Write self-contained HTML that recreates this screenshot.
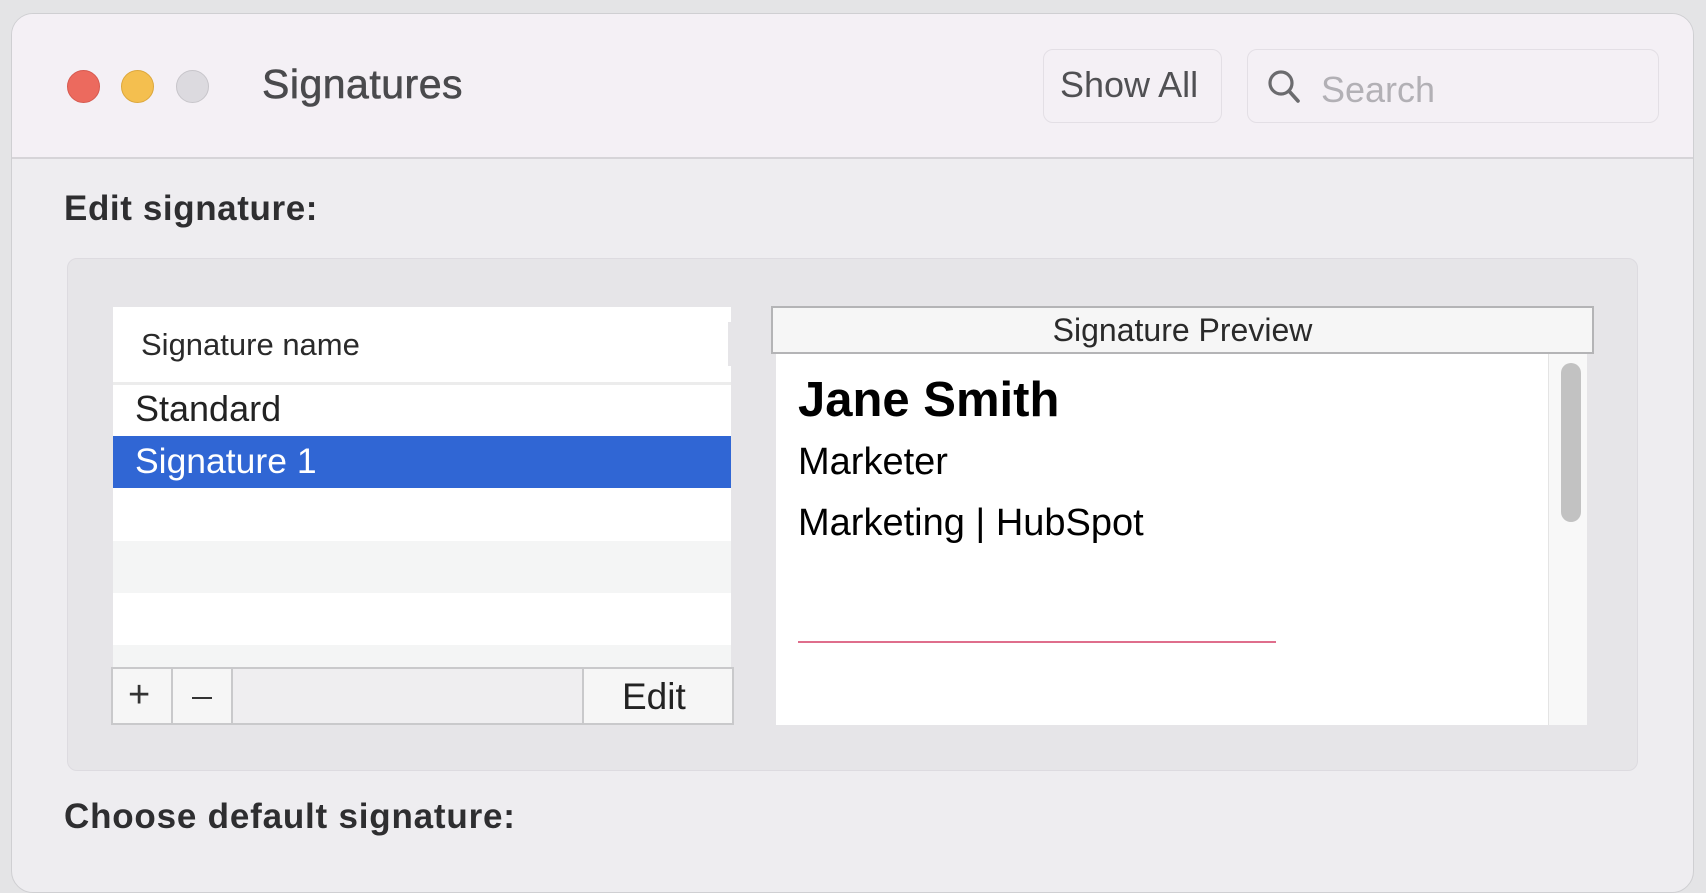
<!DOCTYPE html>
<html><head><style>
*{margin:0;padding:0;box-sizing:border-box}
body{width:1706px;height:862px;background:#e4e4e6;font-family:"Liberation Sans",sans-serif;position:relative;overflow:hidden}
.a{position:absolute}
.win{left:11px;top:13px;width:1683px;height:880px;background:#eeedf0;border-radius:22px;border:1px solid #cfcfd2;overflow:hidden}
.tb{left:0;top:0;width:100%;height:145px;background:#f4f0f5;border-bottom:2px solid #d6d4d8}
.dot{width:33px;height:33px;border-radius:50%;top:56px}
.t{white-space:nowrap}
</style></head><body>
<div class="a win">
 <div class="a tb"></div>
 <div class="a dot" style="left:55px;background:#ec6a5e;border:1px solid #d65a50"></div>
 <div class="a dot" style="left:109px;background:#f4bf4f;border:1px solid #dca73c"></div>
 <div class="a dot" style="left:164px;background:#dcdadf;border:1px solid #c7c5ca"></div>
 <div class="a t" style="left:250px;top:47px;font-size:41px;color:#4a4a4d;-webkit-text-stroke:0.6px #4a4a4d;letter-spacing:0.5px">Signatures</div>
 <div class="a" style="left:1031px;top:35px;width:179px;height:74px;border:1px solid #e3dfe5;border-radius:10px;background:#f4f0f5"></div>
 <div class="a t" style="left:1048px;top:50px;font-size:36px;color:#505053">Show All</div>
 <div class="a" style="left:1235px;top:35px;width:412px;height:74px;border:1px solid #e3dfe5;border-radius:10px;background:#f4f0f5"></div>
 <svg class="a" style="left:1253px;top:53px" width="40" height="40" viewBox="0 0 40 40"><circle cx="16" cy="16" r="11" fill="none" stroke="#6b6b6e" stroke-width="3.2"/><line x1="24" y1="24" x2="33" y2="34" stroke="#6b6b6e" stroke-width="3.6" stroke-linecap="round"/></svg>
 <div class="a t" style="left:1309px;top:55px;font-size:36px;color:#b2b0b5">Search</div>
 <div class="a t" style="left:52px;top:175px;font-size:35px;font-weight:bold;color:#2e2e30;letter-spacing:0.6px">Edit signature:</div>
 <div class="a" style="left:55px;top:244px;width:1571px;height:513px;background:#e6e5e8;border:1px solid #dddbe0;border-radius:10px"></div>
 <!-- list -->
 <div class="a" style="left:101px;top:293px;width:618px;height:360px;background:#fff"></div>
 <div class="a" style="left:716px;top:308px;width:3px;height:44px;background:#e6e5e8"></div>
 <div class="a t" style="left:129px;top:313px;font-size:31px;color:#2a2a2a">Signature name</div>
 <div class="a" style="left:101px;top:368px;width:618px;height:3px;background:#ececec"></div>
 <div class="a t" style="left:123px;top:374px;font-size:36px;color:#222">Standard</div>
 <div class="a" style="left:101px;top:422px;width:618px;height:52px;background:#3066d4"></div>
 <div class="a t" style="left:123px;top:427px;font-size:35.5px;color:#fff">Signature 1</div>
 <div class="a" style="left:101px;top:527px;width:618px;height:52px;background:#f4f5f5"></div>
 <div class="a" style="left:101px;top:631px;width:618px;height:22px;background:#f4f5f5"></div>
 <div class="a" style="left:99px;top:653px;width:623px;height:58px;background:#efeef0;border:2px solid #c9c9cb"></div>
 <div class="a" style="left:99px;top:653px;width:62px;height:58px;background:#f6f6f6;border:2px solid #c9c9cb"></div>
 <div class="a" style="left:159px;top:653px;width:62px;height:58px;background:#f6f6f6;border:2px solid #c9c9cb"></div>
 <div class="a t" style="left:116px;top:660px;font-size:38px;color:#333">+</div>
 <div class="a" style="left:180px;top:683px;width:20px;height:2px;background:#333"></div>
 <div class="a" style="left:570px;top:653px;width:152px;height:58px;background:#f6f6f6;border:2px solid #c9c9cb"></div>
 <div class="a t" style="left:610px;top:662px;font-size:37px;color:#222">Edit</div>
 <!-- preview -->
 <div class="a" style="left:759px;top:292px;width:823px;height:48px;background:#f6f6f6;border:2px solid #b4b4b6"></div>
 <div class="a t" style="left:759px;top:298px;width:823px;text-align:center;font-size:32px;color:#2a2a2a">Signature Preview</div>
 <div class="a" style="left:764px;top:340px;width:811px;height:371px;background:#fff"></div>
 <div class="a" style="left:1536px;top:340px;width:39px;height:371px;background:#f8f8f8;border-left:1px solid #e4e4e4"></div>
 <div class="a" style="left:1549px;top:349px;width:20px;height:159px;background:#c2c2c2;border-radius:10px"></div>
 <div class="a t" style="left:786px;top:358px;font-size:49px;font-weight:bold;color:#000">Jane Smith</div>
 <div class="a t" style="left:786px;top:427px;font-size:38px;color:#000">Marketer</div>
 <div class="a t" style="left:786px;top:488px;font-size:38px;color:#000">Marketing | HubSpot</div>
 <div class="a" style="left:786px;top:627px;width:478px;height:2px;background:#df6e8c"></div>
 <div class="a t" style="left:52px;top:783px;font-size:35px;font-weight:bold;color:#2e2e30;letter-spacing:0.8px">Choose default signature:</div>
</div>
</body></html>
